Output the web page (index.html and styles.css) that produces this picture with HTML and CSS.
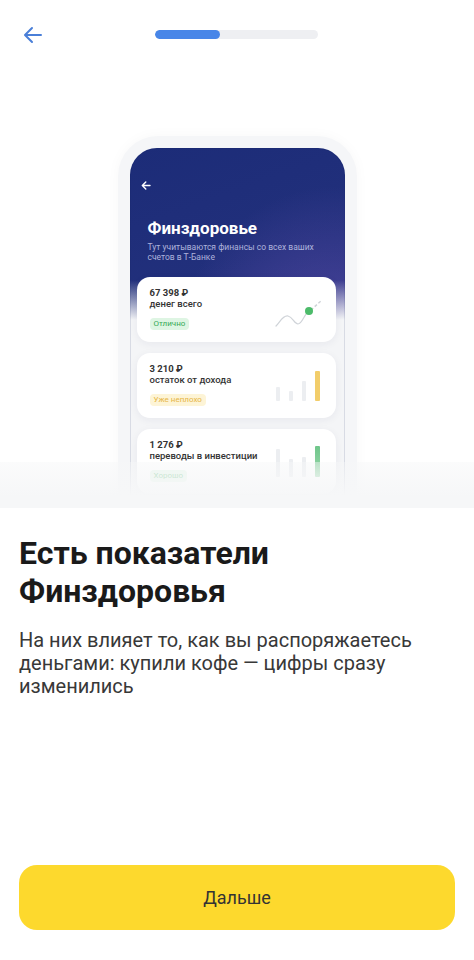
FILE: index.html
```html
<!DOCTYPE html>
<html lang="ru">
<head>
    <meta charset="UTF-8">
    <title>Финздоровье</title>
    <meta name="viewport" content="width=device-width, initial-scale=1.0">
    <link rel="stylesheet" href="styles.css">
</head>
<body>

    <div class="page">

        <div class="topbar">
            <button class="back">
                <svg width="22" height="22" viewBox="0 0 22 22">
                    <path d="M19 11H3.5M10 4l-7 7 7 7" fill="none" stroke="#4a7fd8" stroke-width="2" stroke-linecap="round" stroke-linejoin="round"/>
                </svg>
            </button>
            <div class="progress"><div class="progress-fill" style="width: 40%"></div></div>
        </div>

        <!-- phone preview -->
        <div class="preview">
            <div class="phone">
                <div class="screen">
                    <div class="screen-head">
                        <svg class="mini-back" width="10" height="9" viewBox="0 0 10 9">
                            <path d="M9 4.5H1.5M4.8 1L1.3 4.5 4.8 8" fill="none" stroke="#fff" stroke-width="1.4" stroke-linecap="round" stroke-linejoin="round"/>
                        </svg>
                        <h3>Финздоровье</h3>
                        <p>Тут учитываются финансы со всех ваших счетов в Т‑Банке</p>
                    </div>

                    <div class="cards">
                        <div class="card">
                            <div class="card-text">
                                <b>67 398 ₽</b>
                                <span>денег всего</span>
                                <em class="tag tag-green">Отлично</em>
                            </div>
                            <svg class="chart" width="52" height="40" viewBox="0 0 52 40">
                                <path d="M2 37c4-4 7-11 12-10s6 8 10 8 6-9 10-12" fill="none" stroke="#cfd3d8" stroke-width="1.2" stroke-linecap="round"/>
                                <path d="M37 21l11-10" fill="none" stroke="#cfd3d8" stroke-width="1.4" stroke-dasharray="3 2"/>
                                <circle cx="35" cy="22" r="4" fill="#4cbb6a"/>
                            </svg>
                        </div>

                        <div class="card">
                            <div class="card-text">
                                <b>3 210 ₽</b>
                                <span>остаток от дохода</span>
                                <em class="tag tag-yellow">Уже неплохо</em>
                            </div>
                            <div class="bars">
                                <i style="height: 14px"></i>
                                <i style="height: 10px"></i>
                                <i style="height: 20px"></i>
                                <i class="bar-yellow" style="height: 30px"></i>
                            </div>
                        </div>

                        <div class="card">
                            <div class="card-text">
                                <b>1 276 ₽</b>
                                <span>переводы в инвестиции</span>
                                <em class="tag tag-green tag-faded">Хорошо</em>
                            </div>
                            <div class="bars">
                                <i style="height: 28px"></i>
                                <i style="height: 18px"></i>
                                <i style="height: 20px"></i>
                                <i class="bar-green" style="height: 31px"></i>
                            </div>
                        </div>
                    </div>
                </div>
            </div>
            <div class="preview-fade"></div>
        </div>

        <div class="content">
            <h1>Есть показатели Финздоровья</h1>
            <p>На них влияет то, как вы распоряжаетесь деньгами: купили кофе — цифры сразу изменились</p>
        </div>

        <button class="next">Дальше</button>

    </div>

</body>
</html>
```

FILE: styles.css
```css
* {
    box-sizing: border-box;
    margin: 0;
    padding: 0;
}
body {
    font-family: Roboto, "Noto Sans", sans-serif;
    background: #fff;
    color: #1f1f1f;
}
.page {
    display: flex;
    flex-direction: column;
    height: 960px;
}

/* top bar */
.topbar {
    height: 70px;
    display: flex;
    align-items: flex-start;
    padding: 24px 0 0 22px;
}
.back {
    border: none;
    background: none;
    width: 22px;
    height: 22px;
    cursor: pointer;
}
.progress {
    width: 163px;
    height: 9px;
    margin: 6px 0 0 111px;
    background: #eeeff2;
    border-radius: 5px;
    overflow: hidden;
}
.progress-fill {
    height: 100%;
    background: #4886e8;
    border-radius: 5px;
}

/* phone preview */
.preview {
    position: relative;
    height: 438px;
    overflow: hidden;
    display: flex;
    justify-content: center;
    padding-top: 66px;
}
.phone {
    width: 239px;
    padding: 12px 12px 0;
    background: #f5f6f8;
    border-radius: 40px 40px 0 0;
    box-shadow: 0 0 14px rgba(0, 0, 0, 0.03);
}
.screen {
    height: 420px;
    border-radius: 27px 27px 0 0;
    background:
        linear-gradient(to bottom, rgba(244, 245, 247, 0) 132px, #f4f5f7 172px),
        radial-gradient(ellipse at 95% 60%, #5b4ba8 0%, rgba(91, 75, 168, 0) 60%),
        linear-gradient(160deg, #1c2c78 0%, #25327e 50%, #3d3a94 100%);
    background-color: #f4f5f7;
    box-shadow: inset 0 0 0 1px rgba(20, 30, 90, 0.12);
}
.screen-head {
    padding: 33px 14px 0 18px;
    color: #fff;
}
.mini-back {
    display: block;
    margin-left: -7px;
}
.screen-head h3 {
    font-size: 17px;
    font-weight: 700;
    margin-top: 28px;
    line-height: 20px;
}
.screen-head p {
    font-size: 8.5px;
    line-height: 10px;
    color: #aeb3dc;
    margin-top: 4px;
    padding-right: 12px;
}
.cards {
    display: flex;
    flex-direction: column;
    gap: 11px;
    padding: 15px 9px 0 7px;
}
.card {
    height: 65px;
    background: #fff;
    border-radius: 13px;
    box-shadow: 0 2px 8px rgba(30, 40, 80, 0.06);
    display: flex;
    justify-content: space-between;
    padding: 10px 10px 0 13px;
}
.card-text {
    display: flex;
    flex-direction: column;
    align-items: flex-start;
    font-size: 9.5px;
    line-height: 11px;
    color: #333;
}
.card-text b {
    font-weight: 700;
}
.card-text span {
    font-weight: 500;
}
.tag {
    font-style: normal;
    font-size: 8px;
    line-height: 12px;
    padding: 0 4px;
    border-radius: 4px;
    margin-top: 9px;
}
.tag-green {
    color: #35a955;
    background: #def5e3;
}
.tag-yellow {
    color: #e6b444;
    background: #fdf4d6;
}
.tag-faded {
    opacity: 0.7;
}
.chart {
    margin-top: 2px;
}
.bars {
    display: flex;
    align-items: flex-end;
    gap: 9px;
    height: 33px;
    margin: 5px 6px 0 0;
}
.bars i {
    width: 4px;
    background: #eceef1;
    border-radius: 1px;
}
.bars .bar-yellow {
    width: 5px;
    background: #f2cd6a;
}
.bars .bar-green {
    width: 5px;
    background: linear-gradient(#6fc68a, #9dd8ae);
}
.preview-fade {
    position: absolute;
    left: 0;
    right: 0;
    bottom: 0;
    height: 46px;
    background: linear-gradient(rgba(246, 247, 248, 0.45), #f6f7f8 75%);
}

/* text */
.content {
    padding: 26px 19px 0;
    flex: 1;
}
.content h1 {
    font-size: 32px;
    line-height: 38px;
    font-weight: 700;
    color: #1a1a1a;
}
.content p {
    font-size: 20px;
    line-height: 23px;
    color: #383838;
    margin-top: 19px;
}

/* bottom button */
.next {
    margin: 0 19px 30px;
    height: 65px;
    border: none;
    border-radius: 18px;
    background: #fdd92d;
    font-family: Roboto, sans-serif;
    font-size: 18px;
    color: #333;
    cursor: pointer;
}
```
